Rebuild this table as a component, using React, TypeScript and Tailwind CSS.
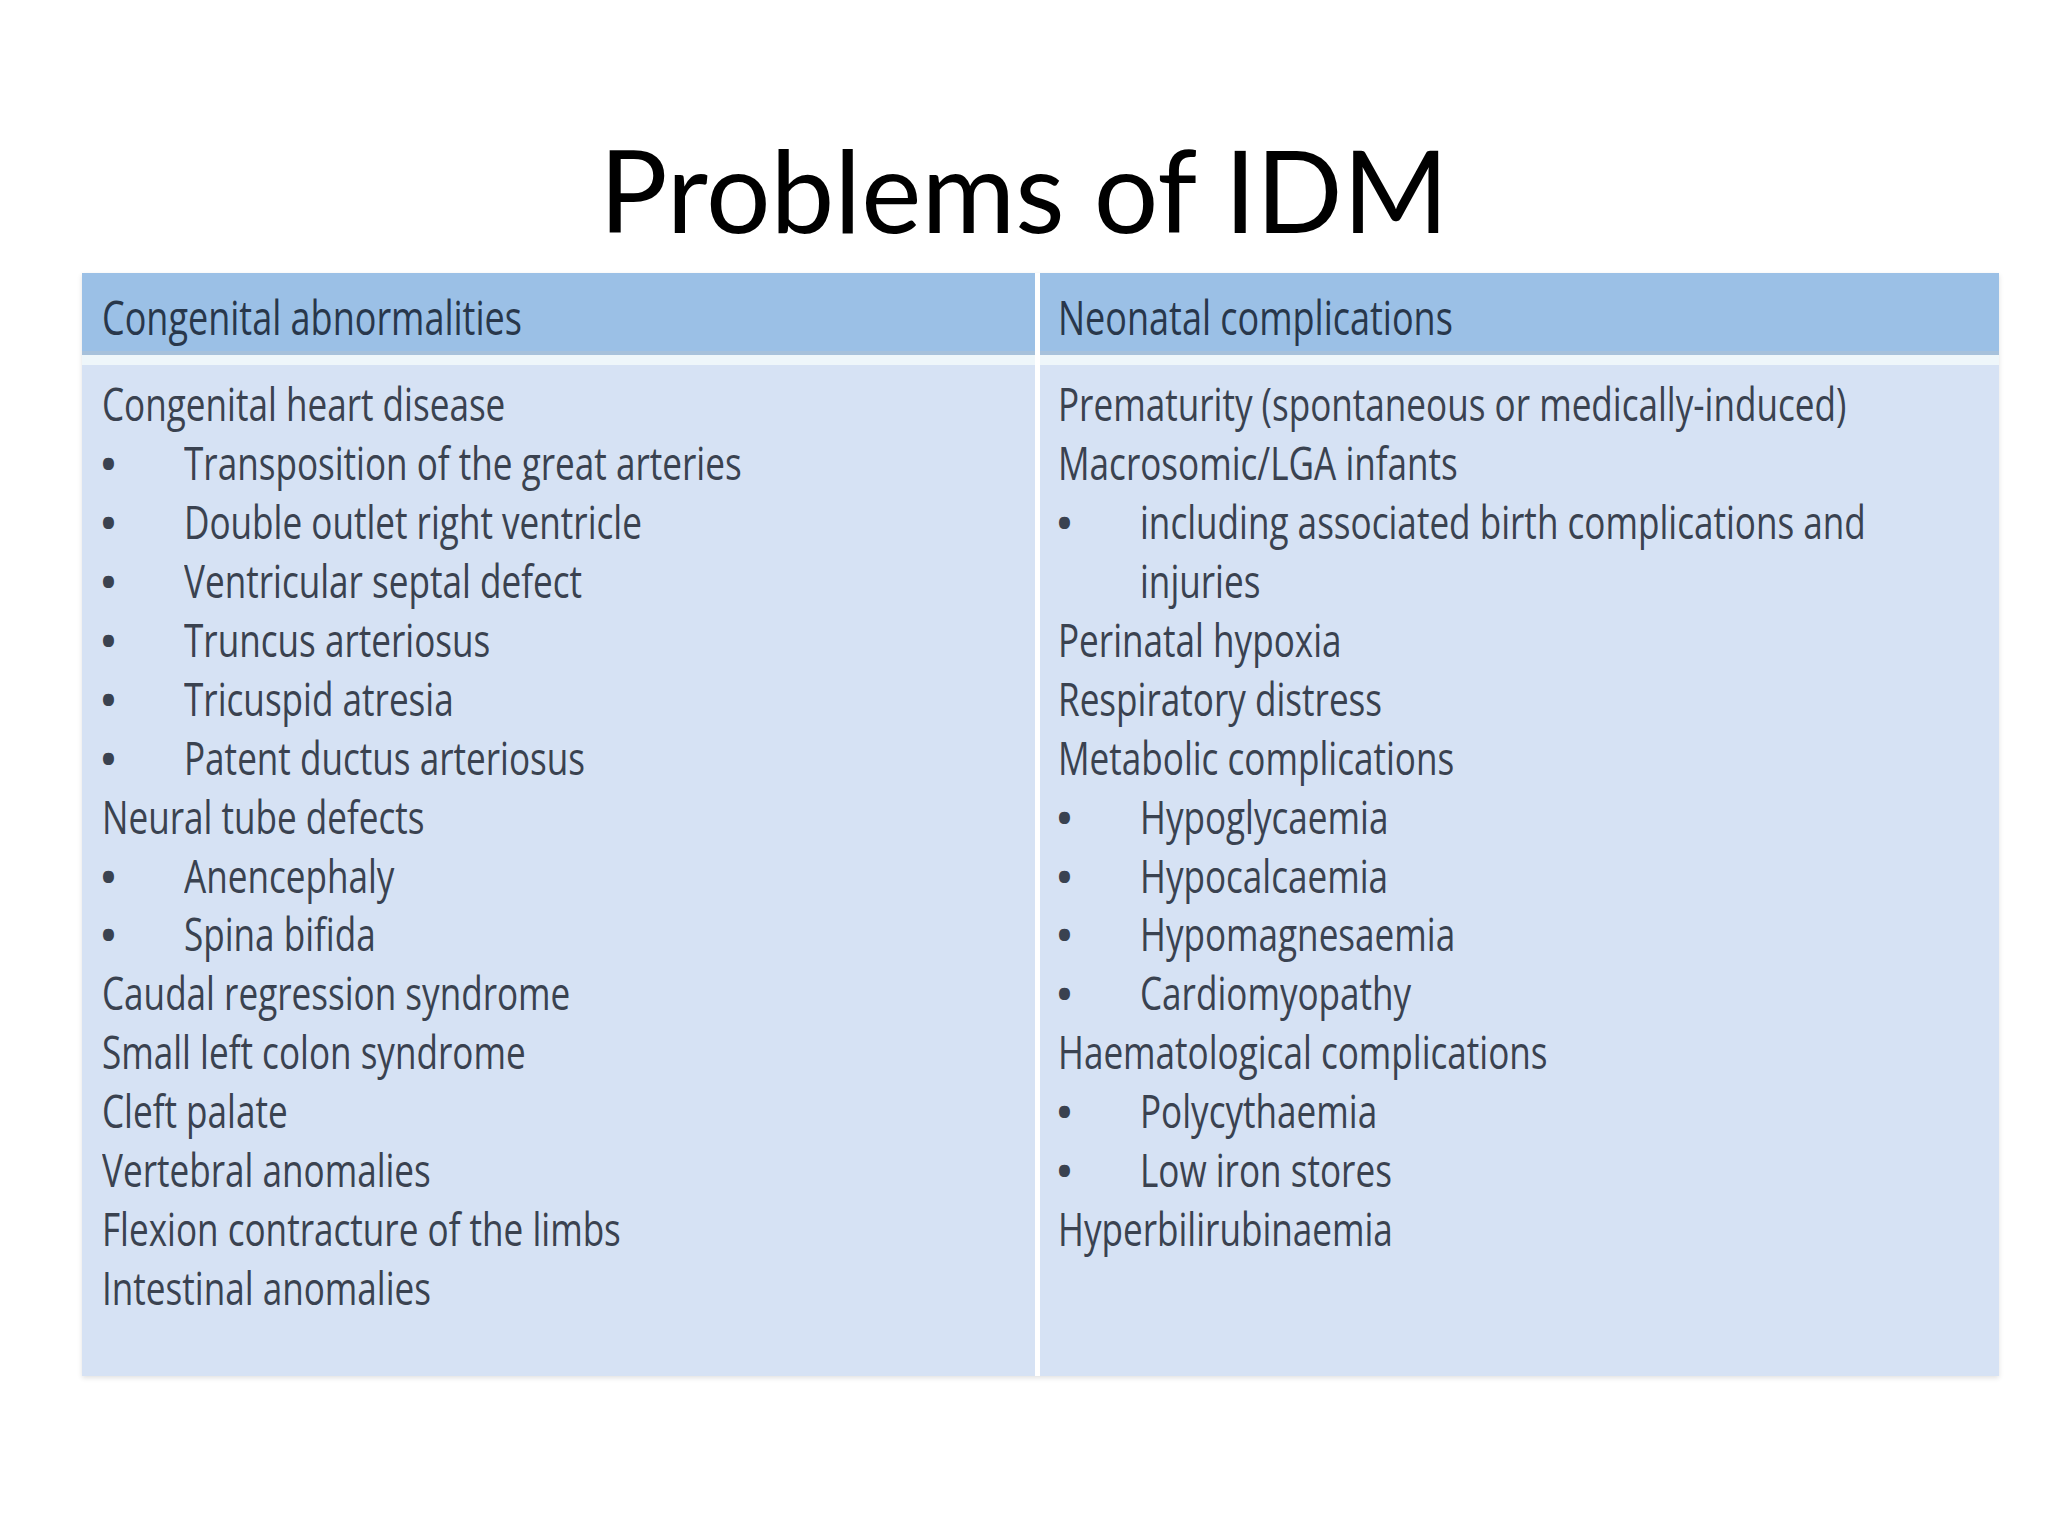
import React from 'react';

type Line = { text: string; bullet?: boolean; cont?: boolean };

const left: Line[] = [
  { text: 'Congenital heart disease' },
  { text: 'Transposition of the great arteries', bullet: true },
  { text: 'Double outlet right ventricle', bullet: true },
  { text: 'Ventricular septal defect', bullet: true },
  { text: 'Truncus arteriosus', bullet: true },
  { text: 'Tricuspid atresia', bullet: true },
  { text: 'Patent ductus arteriosus', bullet: true },
  { text: 'Neural tube defects' },
  { text: 'Anencephaly', bullet: true },
  { text: 'Spina bifida', bullet: true },
  { text: 'Caudal regression syndrome' },
  { text: 'Small left colon syndrome' },
  { text: 'Cleft palate' },
  { text: 'Vertebral anomalies' },
  { text: 'Flexion contracture of the limbs' },
  { text: 'Intestinal anomalies' },
];

const right: Line[] = [
  { text: 'Prematurity (spontaneous or medically-induced)' },
  { text: 'Macrosomic/LGA infants' },
  { text: 'including associated birth complications and', bullet: true },
  { text: 'injuries', cont: true },
  { text: 'Perinatal hypoxia' },
  { text: 'Respiratory distress' },
  { text: 'Metabolic complications' },
  { text: 'Hypoglycaemia', bullet: true },
  { text: 'Hypocalcaemia', bullet: true },
  { text: 'Hypomagnesaemia', bullet: true },
  { text: 'Cardiomyopathy', bullet: true },
  { text: 'Haematological complications' },
  { text: 'Polycythaemia', bullet: true },
  { text: 'Low iron stores', bullet: true },
  { text: 'Hyperbilirubinaemia' },
];

const Row = ({ line }: { line: Line }) => (
  <div className="flex h-[58.95px] items-start">
    {(line.bullet || line.cont) && (
      <span className="-ml-[2px] w-[84px] shrink-0 font-semibold">{line.bullet ? '•' : ''}</span>
    )}
    <span className="inline-block origin-left scale-x-[0.78] whitespace-nowrap">{line.text}</span>
  </div>
);

const Column = ({ title, lines, pad }: { title: string; lines: Line[]; pad: string }) => (
  <div className="flex flex-col">
    <div className="h-[82px] border-b-4 border-[#a7c1db] bg-[#9bc0e6] pt-[9px] leading-[70px] text-[48px] text-[#28374b]">
      <div className={pad}>
        <span className="inline-block origin-left scale-x-[0.75] whitespace-nowrap">{title}</span>
      </div>
    </div>
    <div className="h-[10px] bg-[#eef6fa]" />
    <div className={`h-[1011px] bg-[#d6e2f4] pt-[10px] text-[45px] leading-[58.95px] text-[#3a4250] ${pad}`}>
      {lines.map((l, i) => (
        <Row key={i} line={l} />
      ))}
    </div>
  </div>
);

export default function App() {
  return (
    <div className="h-[1536px] w-[2048px] overflow-hidden bg-white" style={{ fontFamily: '"Open Sans", sans-serif' }}>
      <h1
        className="pt-[134px] text-center text-[114px] leading-[110px] text-black"
        style={{ fontFamily: 'Lato, "Open Sans", sans-serif' }}
      >
        Problems of IDM
      </h1>
      <div className="ml-[82px] mt-[29px] grid w-[1917px] grid-cols-[953px_959px] gap-x-[5px] bg-white shadow-[0_2px_5px_rgba(0,0,0,0.12)]">
        <Column title="Congenital abnormalities" lines={left} pad="pl-[20px]" />
        <Column title="Neonatal complications" lines={right} pad="pl-[18px]" />
      </div>
    </div>
  );
}
